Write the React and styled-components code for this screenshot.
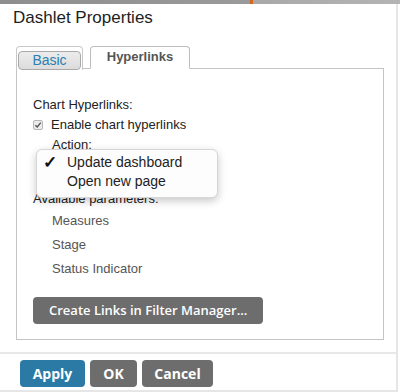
import React from 'react';
import styled, { createGlobalStyle } from 'styled-components';

const GlobalStyle = createGlobalStyle`
  html, body {
    margin: 0;
    padding: 0;
    background: #ffffff;
  }
  #root {
    width: 400px;
    height: 392px;
    overflow: hidden;
  }
`;

const Page = styled.div`
  width: 400px;
  height: 392px;
  display: flex;
  flex-direction: column;
  font-family: "Liberation Sans", Arial, sans-serif;
  color: #222;
`;

const BackStrip = styled.div`
  height: 4px;
  flex-shrink: 0;
  background: linear-gradient(
    to right,
    #8e8e8e 0,
    #9a9a9a 250px,
    #d2691e 250px,
    #d2691e 253px,
    #a8a8a8 253px,
    #b4b4b4 400px
  );
`;

const Dialog = styled.div`
  flex: 1;
  display: flex;
  flex-direction: column;
  background: #fff;
  border-right: 2px solid #e6e6e6;
  border-bottom: 2px solid #e6e6e6;
  width: 398px;
  box-sizing: border-box;
`;

const Title = styled.h1`
  margin: 0;
  padding: 3px 13px 0;
  height: 42px;
  box-sizing: border-box;
  font-size: 17px;
  font-weight: normal;
  line-height: 22px;
  color: #1e1e1e;
`;

const Body = styled.div`
  padding: 0 13px 0 16px;
  height: 306px;
  box-sizing: border-box;
`;

const TabBar = styled.div`
  display: flex;
  align-items: flex-end;
  gap: 7px;
  height: 22px;
  position: relative;
  z-index: 1;
`;

const BasicFrame = styled.div`
  width: 67px;
  height: 24px;
  box-sizing: border-box;
  border: 1px solid #c8c8c8;
  border-bottom: none;
  border-radius: 4px 4px 0 0;
  padding: 4px 1px 0 1px;
  align-self: flex-start;
  background: #fff;
`;

const BasicButton = styled.div`
  height: 19px;
  box-sizing: border-box;
  border: 1px solid #a9a9a9;
  border-radius: 4px;
  background: linear-gradient(#ececec, #dcdcdc);
  color: #2a7fb3;
  font-size: 14px;
  line-height: 17px;
  text-align: center;
`;

const ActiveTab = styled.div`
  width: 100px;
  height: 23px;
  box-sizing: border-box;
  border: 1px solid #bdbdbd;
  border-bottom: 1px solid #fff;
  border-radius: 4px 4px 0 0;
  margin-bottom: -1px;
  background: #fff;
  color: #555;
  font-weight: bold;
  font-size: 13px;
  line-height: 20px;
  text-align: center;
`;

const Panel = styled.div`
  position: relative;
  width: 368px;
  height: 272px;
  box-sizing: border-box;
  border: 1px solid #c4c4c4;
  padding: 26px 16px 0 16px;
  font-size: 13px;
`;

const Line = styled.div`
  line-height: 20px;
  height: 20px;
  padding-left: ${p => (p.$indent ? 19 : 0)}px;
  display: flex;
  align-items: center;
  gap: 8px;
`;

const Check = styled.span`
  width: 10px;
  height: 10px;
  margin-left: -19px;
  box-sizing: border-box;
  border: 1px solid #b5b5b5;
  border-radius: 2px;
  background: #ececec;
  display: flex;
  align-items: center;
  justify-content: center;
`;

const SelectSpace = styled.div`
  height: 34px;
`;

const Param = styled.div`
  height: 24px;
  line-height: 24px;
  padding-left: 19px;
  color: #555;
`;

const GreyButton = styled.button`
  margin-top: 16px;
  height: 27px;
  padding: 0 16px;
  border: none;
  border-radius: 4px;
  background: ${p => (p.$primary ? '#2a7aa5' : '#6d6d6d')};
  color: #fff;
  font-family: "Open Sans", "Liberation Sans", sans-serif;
  font-weight: 600;
  font-size: 13px;
  line-height: 27px;
  cursor: pointer;
`;

const Popup = styled.div`
  position: absolute;
  left: 19px;
  top: 80px;
  width: 182px;
  height: 49px;
  box-sizing: border-box;
  background: #fdfdfd;
  border: 1px solid #d6d6d6;
  border-radius: 6px;
  box-shadow: 0 3px 8px rgba(0, 0, 0, 0.22);
  padding-top: 3px;
  font-size: 14px;
`;

const PopupItem = styled.div`
  height: 19px;
  line-height: 19px;
  display: flex;
  align-items: center;
  color: #222;
`;

const Tick = styled.span`
  width: 30px;
  padding-left: 6px;
  box-sizing: border-box;
  font-size: 17px;
  font-weight: bold;
  color: #111;
`;

const Footer = styled.div`
  border-top: 2px solid #e8e8e8;
  padding: 6px 20px 0;
  display: flex;
  gap: 5px;
`;

const FooterButton = styled(GreyButton)`
  margin-top: 0;
  font-size: 14px;
  font-weight: 700;
  padding: 0;
  width: ${p => p.$w}px;
`;

const CheckMark = () => (
  <svg width="8" height="8" viewBox="0 0 8 8">
    <path d="M1.3 4.2 L3.2 6 L6.8 1.6" fill="none" stroke="#555" strokeWidth="1.4" />
  </svg>
);

export default function App() {
  return (
    <>
      <GlobalStyle />
      <Page>
        <BackStrip />
        <Dialog>
          <Title>Dashlet Properties</Title>
          <Body>
            <TabBar>
              <BasicFrame>
                <BasicButton>Basic</BasicButton>
              </BasicFrame>
              <ActiveTab>Hyperlinks</ActiveTab>
            </TabBar>
            <Panel>
              <Line>Chart Hyperlinks:</Line>
              <Line $indent>
                <Check>
                  <CheckMark />
                </Check>
                Enable chart hyperlinks
              </Line>
              <Line $indent>Action:</Line>
              <SelectSpace />
              <Line>Available parameters:</Line>
              <Param>Measures</Param>
              <Param>Stage</Param>
              <Param>Status Indicator</Param>
              <GreyButton>Create Links in Filter Manager...</GreyButton>
              <Popup>
                <PopupItem>
                  <Tick>✓</Tick>Update dashboard
                </PopupItem>
                <PopupItem>
                  <Tick />Open new page
                </PopupItem>
              </Popup>
            </Panel>
          </Body>
          <Footer>
            <FooterButton $primary $w={65}>Apply</FooterButton>
            <FooterButton $w={47}>OK</FooterButton>
            <FooterButton $w={71}>Cancel</FooterButton>
          </Footer>
        </Dialog>
      </Page>
    </>
  );
}
